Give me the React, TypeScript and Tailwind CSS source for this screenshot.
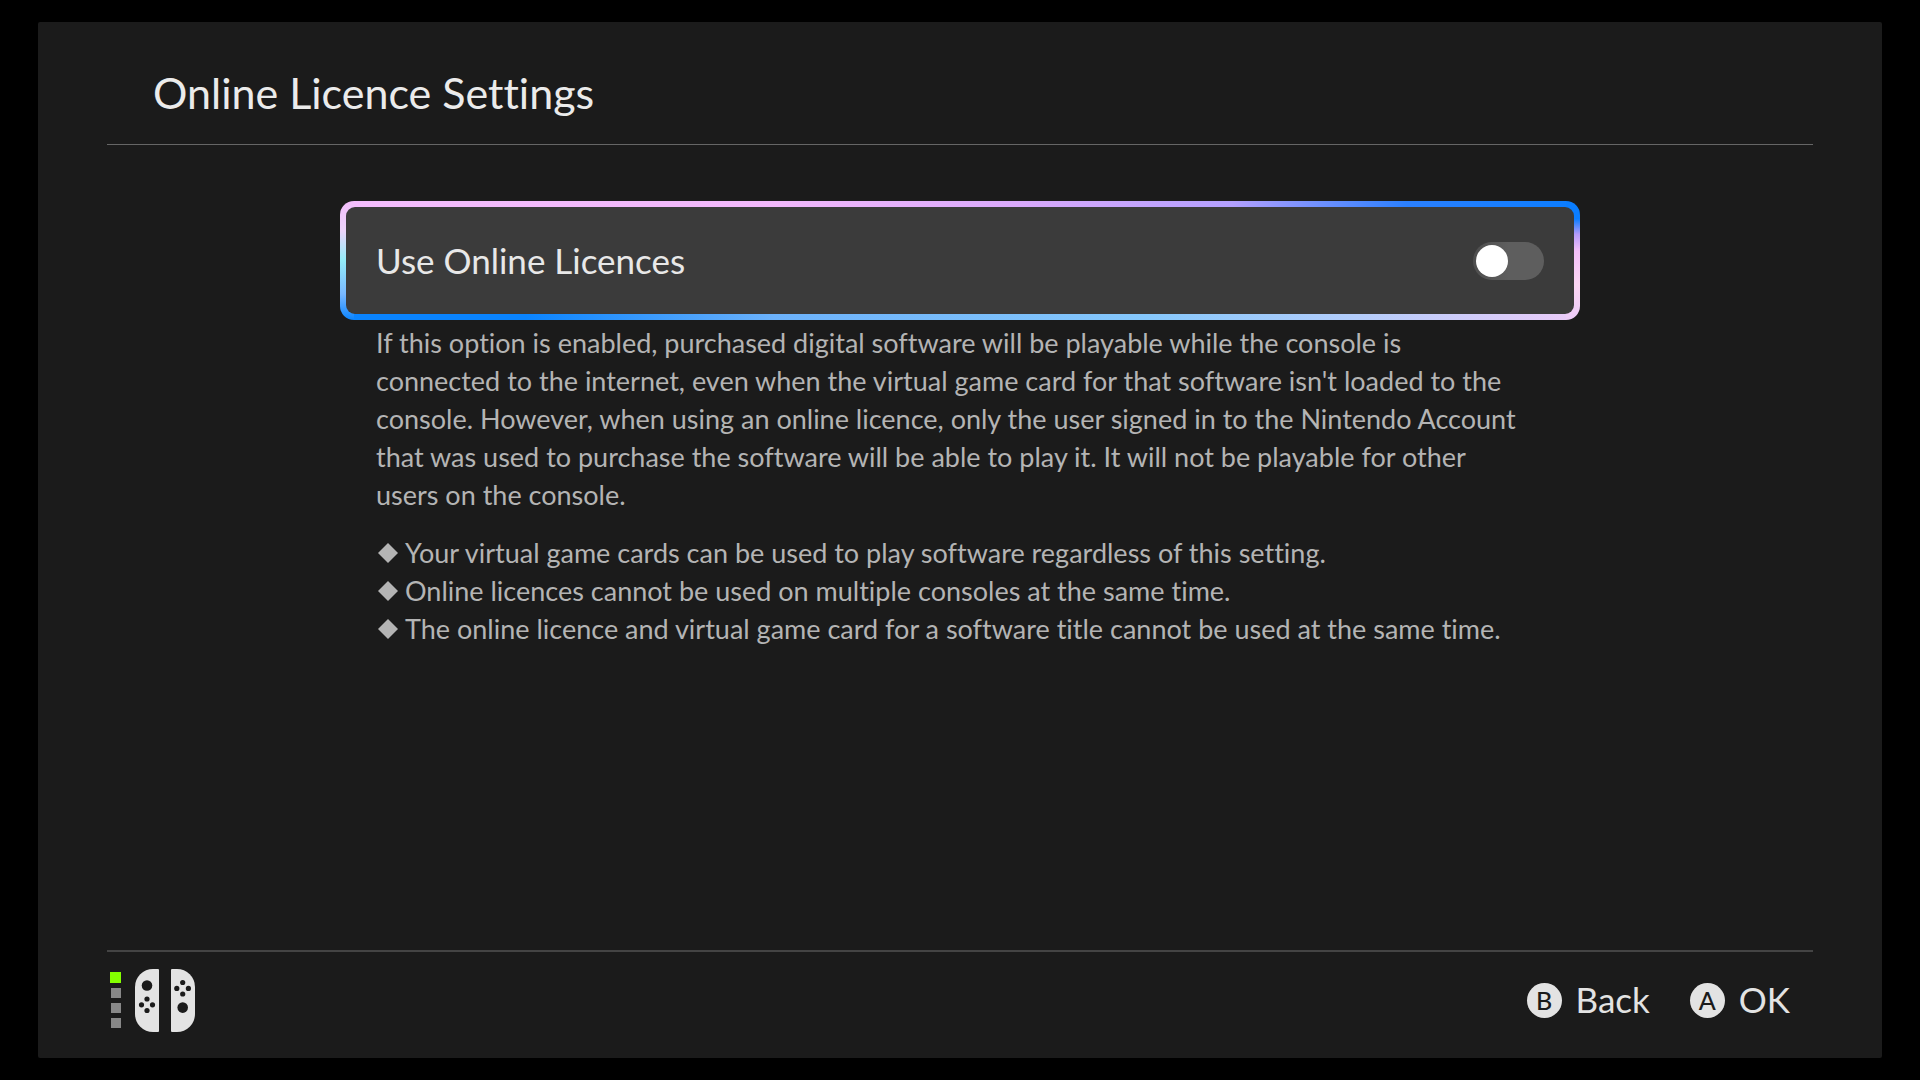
import { useState } from "react";

const notes = [
  "Your virtual game cards can be used to play software regardless of this setting.",
  "Online licences cannot be used on multiple consoles at the same time.",
  "The online licence and virtual game card for a software title cannot be used at the same time.",
];

function PlayerLights() {
  return (
    <div className="flex flex-col items-center gap-[5px]">
      <span className="size-[11px] bg-[#84ff00]" />
      <span className="size-[10px] bg-[#888888]" />
      <span className="size-[10px] bg-[#888888]" />
      <span className="size-[10px] bg-[#888888]" />
    </div>
  );
}

function ControllerIcon() {
  return (
    <svg width="60" height="63" viewBox="0 0 60 63" role="img" aria-label="Controllers">
      <g fill="#e3e3e3">
        <path d="M18 0H23Q24 0 24 1V62Q24 63 23 63H18A18 18 0 0 1 0 45V18A18 18 0 0 1 18 0Z" />
        <path d="M42 0H37Q36 0 36 1V62Q36 63 37 63H42A18 18 0 0 0 60 45V18A18 18 0 0 0 42 0Z" />
      </g>
      <g fill="#1b1b1b">
        <circle cx="12" cy="16.5" r="5.3" />
        <circle cx="12" cy="30" r="2.6" />
        <circle cx="6.5" cy="35.8" r="2.6" />
        <circle cx="17.5" cy="35.8" r="2.6" />
        <circle cx="12" cy="41.5" r="2.6" />
        <circle cx="47.7" cy="13.5" r="2.6" />
        <circle cx="41.8" cy="19.4" r="2.6" />
        <circle cx="53.4" cy="19.4" r="2.6" />
        <circle cx="47.7" cy="25" r="2.6" />
        <circle cx="47.7" cy="38.6" r="5.3" />
      </g>
    </svg>
  );
}

function ButtonHint({ letter, label }: { letter: string; label: string }) {
  return (
    <button type="button" className="flex items-center gap-[14px] text-[35px] leading-[44px] text-[#e3e3e3]">
      <span className="flex size-[35px] items-center justify-center rounded-full bg-[#e3e3e3] text-[25px] leading-none font-medium text-[#1b1b1b]">
        {letter}
      </span>
      <span className="pb-[2px]">{label}</span>
    </button>
  );
}

export default function App() {
  const [enabled, setEnabled] = useState(false);

  return (
    <div className="flex min-h-screen bg-black px-[38px] py-[22px] font-['Lato','Noto_Sans',sans-serif] [font-variant-ligatures:none]">
      <div className="flex flex-1 flex-col rounded-[2px] bg-[#1b1b1b] px-[69px]">
        <header className="border-b border-[#666666] pt-[41px] pb-[21px] pl-[46px]">
          <h1 className="text-[43px] leading-[60px] text-[#ebebeb]">Online Licence Settings</h1>
        </header>

        <main className="mx-auto mt-[56px] w-full max-w-[1240px] flex-1">
          {/* The focus ring is four gradient strips behind the row */}
          <div className="rounded-[14px] bg-[linear-gradient(to_bottom,#f3bdfb,#ecd4fa_25%,#93ecf8_50%,#79b8ff_78%,#0a84ff),linear-gradient(to_bottom,#0a7dff_15%,#b59bfb_28%,#f3bff8_42%,#fbd5f3_70%,#eccbf8),linear-gradient(to_right,#f4bdfd,#f2b8fb_35%,#d9a9fb_55%,#b3a0ff_72%,#2b80ff_86%,#0a7dff),linear-gradient(to_right,#0a84ff_15%,#6cb2fb_35%,#86c8fc_65%,#b4cdfb_82%,#eccbf8)] bg-[length:14px_100%,14px_100%,100%_50%,100%_50%] bg-[position:left,right,top,bottom] bg-no-repeat p-[6px]">
            <label className="flex h-[107px] cursor-pointer items-center justify-between rounded-[9px] bg-[#3b3b3b] pr-[30px] pl-[30px]">
              <span className="pb-[2px] text-[35px] leading-[44px] text-[#e8e8e8]">Use Online Licences</span>
              <input
                type="checkbox"
                role="switch"
                checked={enabled}
                onChange={(e) => setEnabled(e.target.checked)}
                className="peer sr-only"
              />
              <span className="flex h-[38px] w-[71px] rounded-full bg-linear-to-r from-[#4e4e4e] via-[#5e5e5e] via-50% to-[#5e5e5e] p-[3px] peer-checked:justify-end">
                <span className="size-[32px] rounded-full bg-white" />
              </span>
            </label>
          </div>

          <div className="px-9 pt-[4px] text-[27px] leading-[38px] text-[#b4b4b4]">
            <p>
              If this option is enabled, purchased digital software will be playable while the console is
              <br />
              connected to the internet, even when the virtual game card for that software isn't loaded to the
              <br />
              console. However, when using an online licence, only the user signed in to the Nintendo Account
              <br />
              that was used to purchase the software will be able to play it. It will not be playable for other
              <br />
              users on the console.
            </p>
            <ul className="mt-5">
              {notes.map((note) => (
                <li key={note} className="flex items-center gap-[7px]">
                  <svg width="22" height="22" viewBox="0 0 22 22" aria-hidden="true">
                    <path d="M12 1L22 11L12 21L2 11Z" fill="currentColor" />
                  </svg>
                  {note}
                </li>
              ))}
            </ul>
          </div>
        </main>

        <footer className="flex h-[108px] items-center justify-between border-t-2 border-[#444444] pr-[23px] pb-[10px] pl-[3px]">
          <div className="flex items-center gap-[14px]">
            <PlayerLights />
            <ControllerIcon />
          </div>
          <div className="flex items-center gap-10">
            <ButtonHint letter="B" label="Back" />
            <ButtonHint letter="A" label="OK" />
          </div>
        </footer>
      </div>
    </div>
  );
}
